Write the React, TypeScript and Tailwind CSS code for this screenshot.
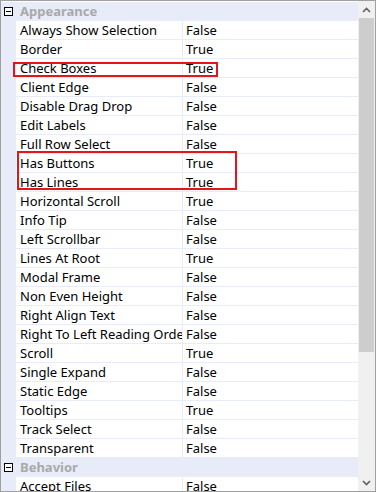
import React from 'react';

const appearance: [string, string][] = [
  ['Always Show Selection', 'False'],
  ['Border', 'True'],
  ['Check Boxes', 'True'],
  ['Client Edge', 'False'],
  ['Disable Drag Drop', 'False'],
  ['Edit Labels', 'False'],
  ['Full Row Select', 'False'],
  ['Has Buttons', 'True'],
  ['Has Lines', 'True'],
  ['Horizontal Scroll', 'True'],
  ['Info Tip', 'False'],
  ['Left Scrollbar', 'False'],
  ['Lines At Root', 'True'],
  ['Modal Frame', 'False'],
  ['Non Even Height', 'False'],
  ['Right Align Text', 'False'],
  ['Right To Left Reading Order', 'False'],
  ['Scroll', 'True'],
  ['Single Expand', 'False'],
  ['Static Edge', 'False'],
  ['Tooltips', 'True'],
  ['Track Select', 'False'],
  ['Transparent', 'False'],
];

const behavior: [string, string][] = [['Accept Files', 'False']];

const Category: React.FC<{ title: string }> = ({ title }) => (
  <div className="flex h-[19px] shrink-0 items-center bg-[#e8ecf8]">
    <div className="flex w-[15px] items-center justify-center">
      <div className="relative h-[9px] w-[9px] border border-black bg-white">
        <div className="absolute left-[1px] top-[3px] h-px w-[5px] bg-black" />
      </div>
    </div>
    <span className="pl-1 text-[13px] font-bold text-[#a9a9a9]">{title}</span>
  </div>
);

const Row: React.FC<{ name: string; value: string }> = ({ name, value }) => (
  <div className="flex h-[19px] shrink-0">
    <div className="w-[15px] shrink-0 bg-[#e8ecf8]" />
    <div className="w-[167px] shrink-0 overflow-hidden whitespace-nowrap border-b border-r border-[#e8ecf8] pl-1 text-[13px] leading-[18px] text-black">
      {name}
    </div>
    <div className="flex-1 overflow-hidden whitespace-nowrap border-b border-[#e8ecf8] pl-[3px] text-[13px] leading-[18px] text-black">
      {value}
    </div>
  </div>
);

export default function App() {
  return (
    <div
      className="relative flex h-[492px] w-[376px] overflow-hidden border border-[#a0a0a0] bg-white"
      style={{ fontFamily: '"Noto Sans", "Liberation Sans", sans-serif' }}
    >
      <div className="flex flex-1 flex-col pt-px">
        <Category title="Appearance" />
        {appearance.map(([n, v]) => (
          <Row key={n} name={n} value={v} />
        ))}
        <Category title="Behavior" />
        {behavior.map(([n, v]) => (
          <Row key={n} name={n} value={v} />
        ))}
      </div>

      {/* scrollbar */}
      <div className="flex w-[17px] shrink-0 flex-col bg-[#f0f0f0]">
        <div className="flex h-[17px] items-center justify-center">
          <svg width="9" height="6" viewBox="0 0 9 6">
            <path d="M1 5 L4.5 1.5 L8 5" stroke="#606060" strokeWidth="1.6" fill="none" />
          </svg>
        </div>
        <div className="mx-px h-[334px] bg-[#cdcdcd]" />
        <div className="flex-1" />
        <div className="flex h-[17px] items-center justify-center">
          <svg width="9" height="6" viewBox="0 0 9 6">
            <path d="M1 1 L4.5 4.5 L8 1" stroke="#606060" strokeWidth="1.6" fill="none" />
          </svg>
        </div>
      </div>

      {/* annotation boxes */}
      <div className="pointer-events-none absolute left-[12px] top-[61px] h-[15px] w-[205px] border-2 border-[#e8141c]" />
      <div className="pointer-events-none absolute left-[16px] top-[150px] h-[39px] w-[220px] border-2 border-[#e8141c]" />
    </div>
  );
}
